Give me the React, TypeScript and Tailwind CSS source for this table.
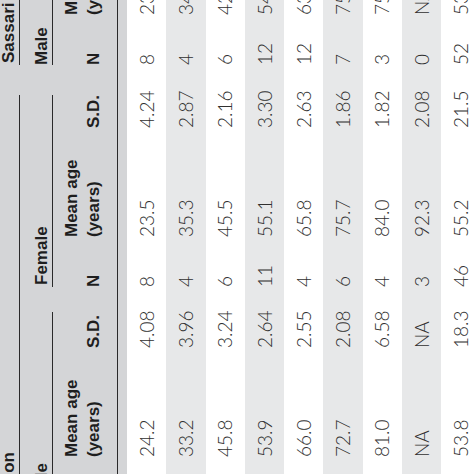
import React from 'react';

const cols = ['w-[109px]', 'w-[61px]', 'w-[50px]', 'w-[109px]', 'w-[63px]', 'w-[50px]', 'w-[80px]'];

const heads = [
  ['Mean age', '(years)'],
  ['S.D.'],
  ['N'],
  ['Mean age', '(years)'],
  ['S.D.'],
  ['N'],
  ['Mean age', '(years)'],
];

const rows = [
  ['24.2', '4.08', '8', '23.5', '4.24', '8', '23.6'],
  ['33.2', '3.96', '4', '35.3', '2.87', '4', '34.5'],
  ['45.8', '3.24', '6', '45.5', '2.16', '6', '42.8'],
  ['53.9', '2.64', '11', '55.1', '3.30', '12', '54.2'],
  ['66.0', '2.55', '4', '65.8', '2.63', '12', '63.5'],
  ['72.7', '2.08', '6', '75.7', '1.86', '7', '75.1'],
  ['81.0', '6.58', '4', '84.0', '1.82', '3', '75.7'],
  ['NA', 'NA', '3', '92.3', '2.08', '0', 'NA'],
  ['53.8', '18.3', '46', '55.2', '21.5', '52', '53.9'],
];

const line = 'border-b-[1.5px] border-[#2a2a2a]';

export default function App() {
  return (
    <div className="w-[474px] h-[474px] overflow-hidden bg-white">
      {/* table is printed sideways in the source, so build it upright and turn it */}
      <div className="w-[474px] h-[474px] -rotate-90 overflow-hidden font-['Lato',sans-serif]">
        <div className="bg-[#d4d5d7] pb-[9.5px] font-['Liberation_Sans',Arial,sans-serif] text-[17px] font-bold text-[#1e1e1e]">
          {/* group row */}
          <div className="flex">
            <div className={`w-[379px] h-[19.5px] pt-[1px] ${line}`}>
              <div className="flex w-[22px] justify-end whitespace-nowrap leading-[16px]">Population</div>
            </div>
            <div className={`ml-[30px] flex-1 h-[19.5px] pt-[1px] ${line}`}>
              <div className="whitespace-nowrap leading-[16px] pl-[2px]">Sassari</div>
            </div>
          </div>
          {/* sex row */}
          <div className="flex">
            <div className={`w-[162px] h-[33.5px] pt-[14px] ${line}`}>
              <div className="flex w-[11px] justify-end whitespace-nowrap leading-[16px]">Male</div>
            </div>
            <div className={`ml-[25px] w-[192px] h-[33.5px] pt-[14px] ${line}`}>
              <div className="whitespace-nowrap leading-[16px] pl-[2px]">Female</div>
            </div>
            <div className={`ml-[30px] flex-1 h-[33.5px] pt-[14px] ${line}`}>
              <div className="whitespace-nowrap leading-[16px]">Male</div>
            </div>
          </div>
          {/* column heads */}
          <div className={`flex h-[64.5px] items-end pb-[12px] pl-[17px] ${line}`}>
            {heads.map((h, i) => (
              <div key={i} className={`${cols[i]} shrink-0 whitespace-nowrap leading-[22px]`}>
                {h.map((t, j) => (
                  <div key={j}>{t}</div>
                ))}
              </div>
            ))}
          </div>
        </div>
        {rows.map((r, i) => (
          <div
            key={i}
            className={`flex h-[39.3px] items-center pl-[17px] text-[19px] font-light text-[#303030] ${
              i % 2 === 1 ? 'bg-[#e7e8e9]' : 'bg-white'
            }`}
          >
            {r.map((v, j) => (
              <div key={j} className={`${cols[j]} shrink-0 whitespace-nowrap leading-[22px]`}>
                {v}
              </div>
            ))}
          </div>
        ))}
      </div>
    </div>
  );
}
